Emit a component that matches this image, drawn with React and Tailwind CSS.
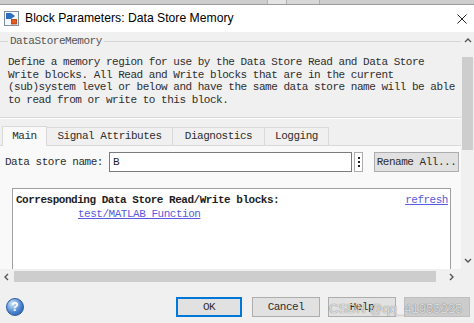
export default function App() {
  const Chevron = ({ dir }) => {
    const paths = {
      up: "M1 5 L4 2 L7 5",
      down: "M1 2 L4 5 L7 2",
      left: "M5 1 L2 4 L5 7",
      right: "M2 1 L5 4 L2 7",
    };
    return (
      <svg width="8" height="8" viewBox="0 0 8 8">
        <path d={paths[dir]} fill="none" stroke="#555" strokeWidth="1.4" />
      </svg>
    );
  };

  return (
    <div className="w-[474px] h-[323px] overflow-hidden bg-[#f0f0f0] flex flex-col relative font-['Liberation_Mono',monospace] text-[11px] tracking-[-0.48px] text-[#2e2e2e]">
      {/* backdrop strip */}
      <div className="h-[5px] bg-[#cdcdcd] border-b border-[#9c9c9c] flex">
        <div className="w-[267px]" />
        <div className="w-[20px] bg-[#e4e4e4] border-x border-[#b0b0b0]" />
        <div className="w-[33px] bg-[#d8d8d8] border-r border-[#b0b0b0]" />
      </div>

      {/* title bar */}
      <div className="h-[27px] bg-white flex items-center">
        <svg className="ml-[4px]" width="15" height="15" viewBox="0 0 15 15">
          <rect x="0.5" y="0.5" width="14" height="14" fill="#f4f8fc" stroke="#7f8fa0" />
          <rect x="2" y="2" width="5" height="6" fill="#2f6fc0" />
          <path d="M7 2 L11 5 L7 8 Z" fill="#2f6fc0" />
          <rect x="7.5" y="8.5" width="5" height="4.5" fill="#e85a20" stroke="#a83a10" strokeWidth="0.8" />
        </svg>
        <span className="ml-[6px] font-['Liberation_Sans',sans-serif] text-[12.2px] tracking-normal text-black">
          Block Parameters: Data Store Memory
        </span>
        <div className="flex-1" />
        <svg className="mr-[7px]" width="10" height="10" viewBox="0 0 10 10">
          <path d="M0.5 0.5 L9.5 9.5 M9.5 0.5 L0.5 9.5" stroke="#222" strokeWidth="1" />
        </svg>
      </div>

      {/* middle */}
      <div className="flex h-[252px]">
        <div className="w-[461px] flex flex-col">
          <div className="flex-1 overflow-hidden flex flex-col">
            {/* groupbox header */}
            <div className="h-[18px] flex items-center">
              <div className="w-[8px] h-px bg-[#d6d6d6]" />
              <span className="px-[2px] text-[#555]">DataStoreMemory</span>
              <div className="flex-1 h-px bg-[#d6d6d6]" />
            </div>
            {/* description */}
            <div className="mt-[6px] pl-[8px] leading-[12.5px] whitespace-nowrap">
              <div>Define a memory region for use by the Data Store Read and Data Store</div>
              <div>Write blocks. All Read and Write blocks that are in the current</div>
              <div>(sub)system level or below and have the same data store name will be able</div>
              <div>to read from or write to this block.</div>
            </div>
            <div className="mt-[11px] h-px bg-[#d8d8d8]" />
            <div className="h-px bg-white" />
            {/* tabs */}
            <div className="mt-[7px] h-[19px] flex items-end pl-[2px]">
              <div className="relative z-10 -mb-px h-[20px] w-[45px] bg-[#f9f9f9] border border-b-0 border-[#d9d9d9] flex items-center justify-center">
                Main
              </div>
              <div className="h-[18px] w-[127px] -ml-px bg-[#f0f0f0] border border-b-0 border-[#d9d9d9] flex items-center justify-center">
                Signal Attributes
              </div>
              <div className="h-[18px] w-[93px] -ml-px bg-[#f0f0f0] border border-b-0 border-[#d9d9d9] flex items-center justify-center">
                Diagnostics
              </div>
              <div className="h-[18px] w-[65px] -ml-px bg-[#f0f0f0] border border-b-0 border-[#d9d9d9] flex items-center justify-center">
                Logging
              </div>
            </div>
            {/* tab panel */}
            <div className="flex-1 bg-[#f9f9f9] border-t border-[#d9d9d9] flex flex-col">
              <div className="mt-[6px] h-[20px] flex items-center">
                <span className="pl-[5px] w-[109px] whitespace-nowrap">Data store name:</span>
                <div className="w-[243px] h-[20px] bg-white border border-[#7a7a7a] flex items-center pl-[3px] text-[#222]">
                  B
                </div>
                <div className="ml-[2px] w-[9px] h-[20px] bg-white border border-[#adadad] flex flex-col items-center justify-center gap-[2px]">
                  <div className="w-[2px] h-[2px] bg-[#222]" />
                  <div className="w-[2px] h-[2px] bg-[#222]" />
                  <div className="w-[2px] h-[2px] bg-[#222]" />
                </div>
                <div className="ml-[11px] w-[85px] h-[20px] bg-[#e1e1e1] border border-[#adadad] flex items-center justify-center whitespace-nowrap">
                  Rename All...
                </div>
              </div>
              <div className="mt-[16px] ml-[12px] w-[439px] flex-1 bg-white border border-b-0 border-[#a0a0a0] flex flex-col">
                <div className="pt-[5px] pl-[3px] pr-[2px] flex justify-between leading-[13px]">
                  <span className="font-bold text-[#1e1e1e]">Corresponding Data Store Read/Write blocks:</span>
                  <span className="text-[#5a5ae0] underline">refresh</span>
                </div>
                <div className="pl-[65px] leading-[13px] mt-[1px]">
                  <span className="text-[#5a5ae0] underline">test/MATLAB Function</span>
                </div>
              </div>
            </div>
          </div>
          {/* horizontal scrollbar */}
          <div className="h-[15px] bg-[#f0f0f0] flex items-stretch">
            <div className="w-[13px] flex items-center justify-center">
              <Chevron dir="left" />
            </div>
            <div className="ml-[1px] w-[422px] my-[2px] bg-[#cdcdcd]" />
            <div className="flex-1 flex items-center justify-end pr-[5px]">
              <Chevron dir="right" />
            </div>
          </div>
        </div>
        <div className="w-[13px] flex flex-col">
          <div className="flex-1 bg-[#f0f0f0] flex flex-col">
            <div className="h-[17px] flex items-center justify-center">
              <Chevron dir="up" />
            </div>
            <div className="mt-[8px] mx-[1px] h-[93px] bg-[#cdcdcd]" />
            <div className="flex-1" />
            <div className="h-[17px] flex items-center justify-center">
              <Chevron dir="down" />
            </div>
          </div>
          <div className="h-[15px] bg-[#f0f0f0]" />
        </div>
      </div>

      {/* bottom bar */}
      <div className="flex-1 flex items-start pt-[13px]">
        <div className="ml-[6px] mt-[1px] w-[18px] h-[18px] rounded-full bg-[radial-gradient(circle_at_35%_30%,#d8e8fb,#4a86d0_55%,#1f4f9e)] border border-[#2a5aa0] flex items-center justify-center font-['Liberation_Sans',sans-serif] font-bold text-[12px] text-white tracking-normal">
          ?
        </div>
        <div className="ml-[152px] w-[66px] h-[20px] bg-[#e1e1e1] border border-[#0078d7] shadow-[inset_0_0_0_1px_#0078d7] flex items-center justify-center">
          OK
        </div>
        <div className="ml-[10px] w-[68px] h-[20px] bg-[#e1e1e1] border border-[#adadad] flex items-center justify-center">
          Cancel
        </div>
        <div className="ml-[8px] w-[68px] h-[20px] bg-[#e1e1e1] border border-[#adadad] flex items-center justify-center">
          Help
        </div>
        <div className="ml-[8px] w-[66px] h-[20px] bg-[#cccccc] border border-[#bfbfbf] flex items-center justify-center text-[#c4c4c4]">
          Apply
        </div>
      </div>

      {/* watermark */}
      <div className="absolute left-[329px] top-[299px] font-['Liberation_Sans',sans-serif] text-[13px] tracking-normal text-[rgba(255,255,255,0.75)] [text-shadow:0_0_1px_rgba(0,0,0,0.6)] whitespace-nowrap">
        CSDN @qq_41955225
      </div>
    </div>
  );
}
